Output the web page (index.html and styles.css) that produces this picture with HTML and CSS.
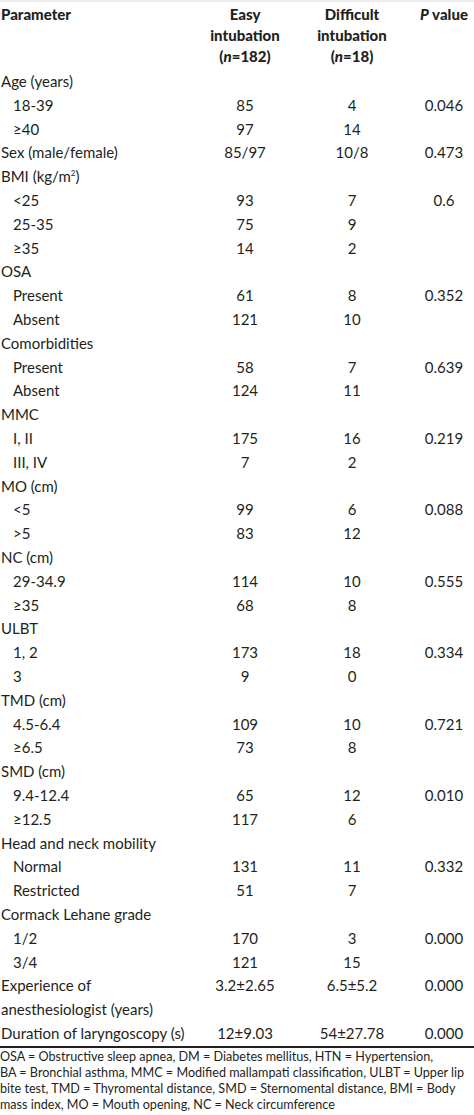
FILE: index.html
```html
<!DOCTYPE html>
<html>
<head>
<meta charset="utf-8">
<link rel="stylesheet" href="styles.css">
</head>
<body>
<div class="page">
  <table class="tbl">
    <colgroup>
      <col class="w1"><col class="w2"><col class="w3"><col class="w4">
    </colgroup>
    <thead>
      <tr>
        <th class="h-param">Parameter</th>
        <th>Easy<br>intubation<br>(<i>n</i>=182)</th>
        <th>Difficult<br>intubation<br>(<i>n</i>=18)</th>
        <th class="h-p"><i>P</i> value</th>
      </tr>
    </thead>
    <tbody>
      <tr><td class="c1">Age (years)</td><td></td><td></td><td></td></tr>
      <tr><td class="c1 sub">18-39</td><td class="c">85</td><td class="c">4</td><td class="c p">0.046</td></tr>
      <tr><td class="c1 sub">≥40</td><td class="c">97</td><td class="c">14</td><td class="c p"></td></tr>
      <tr><td class="c1">Sex (male/female)</td><td class="c">85/97</td><td class="c">10/8</td><td class="c p">0.473</td></tr>
      <tr><td class="c1">BMI (kg/m<sup>2</sup>)</td><td></td><td></td><td></td></tr>
      <tr><td class="c1 sub">&lt;25</td><td class="c">93</td><td class="c">7</td><td class="c p">0.6</td></tr>
      <tr><td class="c1 sub">25-35</td><td class="c">75</td><td class="c">9</td><td class="c p"></td></tr>
      <tr><td class="c1 sub">≥35</td><td class="c">14</td><td class="c">2</td><td class="c p"></td></tr>
      <tr><td class="c1">OSA</td><td></td><td></td><td></td></tr>
      <tr><td class="c1 sub">Present</td><td class="c">61</td><td class="c">8</td><td class="c p">0.352</td></tr>
      <tr><td class="c1 sub">Absent</td><td class="c">121</td><td class="c">10</td><td class="c p"></td></tr>
      <tr><td class="c1">Comorbidities</td><td></td><td></td><td></td></tr>
      <tr><td class="c1 sub">Present</td><td class="c">58</td><td class="c">7</td><td class="c p">0.639</td></tr>
      <tr><td class="c1 sub">Absent</td><td class="c">124</td><td class="c">11</td><td class="c p"></td></tr>
      <tr><td class="c1">MMC</td><td></td><td></td><td></td></tr>
      <tr><td class="c1 sub">I, II</td><td class="c">175</td><td class="c">16</td><td class="c p">0.219</td></tr>
      <tr><td class="c1 sub">III, IV</td><td class="c">7</td><td class="c">2</td><td class="c p"></td></tr>
      <tr><td class="c1">MO (cm)</td><td></td><td></td><td></td></tr>
      <tr><td class="c1 sub">&lt;5</td><td class="c">99</td><td class="c">6</td><td class="c p">0.088</td></tr>
      <tr><td class="c1 sub">&gt;5</td><td class="c">83</td><td class="c">12</td><td class="c p"></td></tr>
      <tr><td class="c1">NC (cm)</td><td></td><td></td><td></td></tr>
      <tr><td class="c1 sub">29-34.9</td><td class="c">114</td><td class="c">10</td><td class="c p">0.555</td></tr>
      <tr><td class="c1 sub">≥35</td><td class="c">68</td><td class="c">8</td><td class="c p"></td></tr>
      <tr><td class="c1">ULBT</td><td></td><td></td><td></td></tr>
      <tr><td class="c1 sub">1, 2</td><td class="c">173</td><td class="c">18</td><td class="c p">0.334</td></tr>
      <tr><td class="c1 sub">3</td><td class="c">9</td><td class="c">0</td><td class="c p"></td></tr>
      <tr><td class="c1">TMD (cm)</td><td></td><td></td><td></td></tr>
      <tr><td class="c1 sub">4.5-6.4</td><td class="c">109</td><td class="c">10</td><td class="c p">0.721</td></tr>
      <tr><td class="c1 sub">≥6.5</td><td class="c">73</td><td class="c">8</td><td class="c p"></td></tr>
      <tr><td class="c1">SMD (cm)</td><td></td><td></td><td></td></tr>
      <tr><td class="c1 sub">9.4-12.4</td><td class="c">65</td><td class="c">12</td><td class="c p">0.010</td></tr>
      <tr><td class="c1 sub">≥12.5</td><td class="c">117</td><td class="c">6</td><td class="c p"></td></tr>
      <tr><td class="c1">Head and neck mobility</td><td></td><td></td><td></td></tr>
      <tr><td class="c1 sub">Normal</td><td class="c">131</td><td class="c">11</td><td class="c p">0.332</td></tr>
      <tr><td class="c1 sub">Restricted</td><td class="c">51</td><td class="c">7</td><td class="c p"></td></tr>
      <tr><td class="c1">Cormack Lehane grade</td><td></td><td></td><td></td></tr>
      <tr><td class="c1 sub">1/2</td><td class="c">170</td><td class="c">3</td><td class="c p">0.000</td></tr>
      <tr><td class="c1 sub">3/4</td><td class="c">121</td><td class="c">15</td><td class="c p"></td></tr>
      <tr><td class="c1">Experience of</td><td class="c">3.2±2.65</td><td class="c">6.5±5.2</td><td class="c p">0.000</td></tr>
      <tr><td class="c1">anesthesiologist (years)</td><td></td><td></td><td></td></tr>
      <tr class="last"><td class="c1">Duration of laryngoscopy (s)</td><td class="c">12±9.03</td><td class="c">54±27.78</td><td class="c p">0.000</td></tr>
    </tbody>
  </table>
  <div class="note">OSA = Obstructive sleep apnea, DM = Diabetes mellitus, HTN = Hypertension,<br>BA = Bronchial asthma, MMC = Modified mallampati classification, ULBT = Upper lip<br>bite test, TMD = Thyromental distance, SMD = Sternomental distance, BMI = Body<br>mass index, MO = Mouth opening, NC = Neck circumference</div>
</div>
</body>
</html>
```

FILE: styles.css
```css
html, body {
  margin: 0;
  padding: 0;
  background: #ffffff;
}
.page {
  width: 474px;
  border-top: 2px solid #ececec;
  font-family: "Lato", "Open Sans", sans-serif;
  color: #231f20;
}
.tbl {
  width: 474px;
  table-layout: fixed;
  border-collapse: collapse;
  border-spacing: 0;
  font-size: 15px;
  line-height: 23.8px;
}
.w1 { width: 195px; }
.w2 { width: 100px; }
.w3 { width: 114px; }
.w4 { width: 65px; }
.tbl td, .tbl th {
  padding: 0;
  vertical-align: top;
}
.tbl th {
  font-weight: 900;
  text-align: center;
  line-height: 21px;
  padding-top: 1.5px;
  padding-bottom: 3.6px;
}
.tbl th.h-param {
  text-align: left;
  padding-left: 1px;
}
.tbl th.h-p {
  padding-left: 5px;
}
.tbl td.c1 {
  padding-left: 1px;
}
.tbl td.c1.sub {
  padding-left: 13px;
}
.tbl td.c {
  text-align: center;
}
.tbl td.p {
  padding-left: 5px;
}
.tbl tr.last td {
  border-bottom: 2.5px solid #231f20;
}
sup {
  font-size: 8px;
  line-height: 0;
  vertical-align: 6px;
}
.note {
  font-size: 12.6px;
  line-height: 16px;
  padding-top: 1px;
  white-space: nowrap;
}
```
